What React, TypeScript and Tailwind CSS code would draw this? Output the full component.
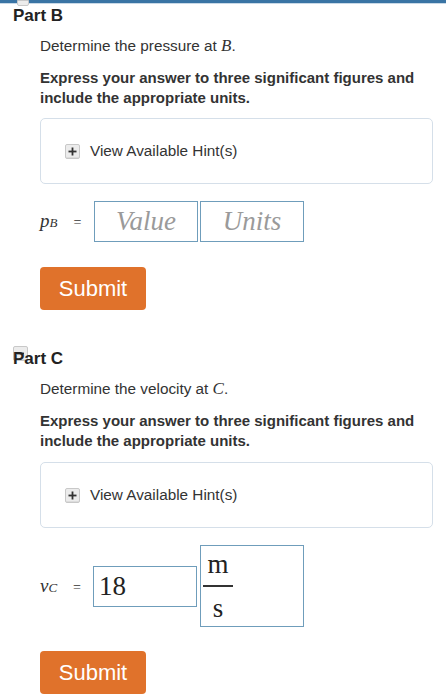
import React from "react";

const sans = { fontFamily: '"Liberation Sans", Arial, sans-serif' };
const serif = { fontFamily: '"Liberation Serif", "Times New Roman", serif' };

function Toggle({ sign }: { sign: "+" | "-" }) {
  return (
    <span className="inline-flex h-[15px] w-[15px] items-center justify-center rounded-[2px] border border-[#c8c8c8] bg-[#ececec] shadow-[inset_0_-1px_0_#dcdcdc]">
      {sign === "+" ? (
        <svg width="9" height="9" viewBox="0 0 9 9">
          <rect x="3.6" y="0.5" width="1.8" height="8" fill="#333" />
          <rect x="0.5" y="3.6" width="8" height="1.8" fill="#333" />
        </svg>
      ) : (
        <svg width="9" height="9" viewBox="0 0 9 9">
          <rect x="1" y="3.6" width="7" height="1.8" fill="#333" />
        </svg>
      )}
    </span>
  );
}

function Hint() {
  return (
    <div className="mr-[13px] flex h-[66px] items-center rounded-[5px] border border-[#d5dfe9] pl-[24px]">
      <Toggle sign="+" />
      <span className="ml-[10px] text-[15.3px] text-[#333]">View Available Hint(s)</span>
    </div>
  );
}

function SubmitBtn() {
  return (
    <button className="flex h-[43px] w-[106px] items-center justify-center rounded-[4px] bg-[#e0722b] text-[22px] text-white">
      Submit
    </button>
  );
}

export default function App() {
  return (
    <div className="relative min-h-[700px] w-[446px] overflow-hidden bg-white" style={sans}>
      <div className="h-[3px] bg-[#3a74a4]" />
      <div className="h-[1px] bg-[#c9d9e7]" />
      <div className="absolute left-[17px] top-0 h-[6px] w-[12px] rounded-b-[2px] border border-[#c8c8c8] bg-[#ececec]" />

      {/* Part B */}
      <div className="pl-[13px] pt-[2px] text-[17px] font-bold leading-[20px] text-[#222]">Part B</div>
      <div className="pl-[40px]">
        <p className="mt-[10px] text-[15.3px] leading-[20px] text-[#333]">
          Determine the pressure at <span className="italic" style={{ ...serif, fontSize: 17 }}>B</span>.
        </p>
        <p className="mt-[12px] pr-[10px] text-[15px] font-bold leading-[20px] text-[#333]">
          Express your answer to three significant figures and include the appropriate units.
        </p>
        <div className="mt-[10px]">
          <Hint />
        </div>
        <div className="mt-[17px] flex items-center">
          <span className="w-[54px] text-[#333]" style={serif}>
            <span className="italic text-[19px]">p</span>
            <span className="italic text-[13px]">B</span>
            <span className="ml-[16px] text-[14px]">=</span>
          </span>
          <div className="flex h-[41px] w-[104px] items-center justify-center border-[1.5px] border-[#6f9dbb]">
            <span className="text-[27px] italic text-[#9a9a9a]" style={serif}>Value</span>
          </div>
          <div className="ml-[2px] flex h-[41px] w-[104px] items-center justify-center border-[1.5px] border-[#6f9dbb]">
            <span className="text-[27px] italic text-[#9a9a9a]" style={serif}>Units</span>
          </div>
        </div>
        <div className="mt-[25px]">
          <SubmitBtn />
        </div>
      </div>

      {/* Part C */}
      <div className="relative mt-[31px] pl-[13px] pt-[8px]">
        <div className="absolute left-[13px] top-0">
          <Toggle sign="-" />
        </div>
        <div className="relative text-[17px] font-bold leading-[20px] text-[#222]">Part C</div>
      </div>
      <div className="pl-[40px]">
        <p className="mt-[10px] text-[15.3px] leading-[20px] text-[#333]">
          Determine the velocity at <span className="italic" style={{ ...serif, fontSize: 17 }}>C</span>.
        </p>
        <p className="mt-[12px] pr-[10px] text-[15px] font-bold leading-[20px] text-[#333]">
          Express your answer to three significant figures and include the appropriate units.
        </p>
        <div className="mt-[11px]">
          <Hint />
        </div>
        <div className="mt-[17px] flex items-center">
          <span className="w-[53px] text-[#333]" style={serif}>
            <span className="italic text-[19px]">v</span>
            <span className="italic text-[13px]">C</span>
            <span className="ml-[16px] text-[14px]">=</span>
          </span>
          <div className="flex h-[41px] w-[104px] items-center border-[1.5px] border-[#6f9dbb] pl-[5px]">
            <span className="text-[27px] text-[#222]" style={serif}>18</span>
          </div>
          <div className="ml-[3px] flex h-[82px] w-[104px] items-center border-[1.5px] border-[#6f9dbb] pl-[2px]">
            <div className="flex flex-col items-center" style={serif}>
              <span className="px-[3px] text-[27px] leading-[24px] text-[#222]">m</span>
              <span className="my-[9px] h-[1.5px] w-[30px] bg-[#333]" />
              <span className="text-[27px] leading-[24px] text-[#222]">s</span>
            </div>
          </div>
        </div>
        <div className="mt-[24px]">
          <SubmitBtn />
        </div>
      </div>
    </div>
  );
}
